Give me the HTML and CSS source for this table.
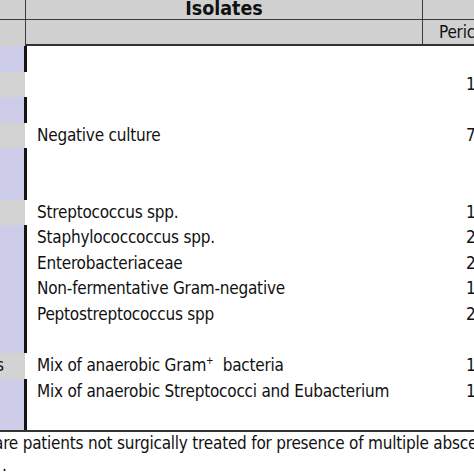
FILE: index.html
```html
<!DOCTYPE html>
<html>
<head>
<meta charset="utf-8">
<link rel="stylesheet" href="styles.css">
</head>
<body>
<div class="sheet">
  <div class="head">
    <div class="h-left r1"></div>
    <div class="h-title r1">Isolates</div>
    <div class="h-right r1"></div>
    <div class="h-left r2"></div>
    <div class="h-mid r2"></div>
    <div class="h-right r2 sub">Peric</div>
  </div>
  <div class="body">
    <div class="lab lav" style="grid-row: 1 / span 1"></div>
    <div class="lab gry" style="grid-row: 2 / span 1"></div>
    <div class="lab lav" style="grid-row: 3 / span 1"></div>
    <div class="lab gry" style="grid-row: 4 / span 1"></div>
    <div class="lab lav" style="grid-row: 5 / span 2"></div>
    <div class="lab gry" style="grid-row: 7 / span 1"></div>
    <div class="lab lav" style="grid-row: 8 / span 5"></div>
    <div class="lab gry" style="grid-row: 13 / span 1"><span class="cut">s</span></div>
    <div class="lab lav" style="grid-row: 14 / span 2"></div>

    <div class="iso" style="grid-row: 1"></div><div class="num" style="grid-row: 1"></div>
    <div class="iso" style="grid-row: 2"></div><div class="num" style="grid-row: 2">1</div>
    <div class="iso" style="grid-row: 3"></div><div class="num" style="grid-row: 3"></div>
    <div class="iso" style="grid-row: 4">Negative culture</div><div class="num" style="grid-row: 4">7</div>
    <div class="iso" style="grid-row: 5"></div><div class="num" style="grid-row: 5"></div>
    <div class="iso" style="grid-row: 6"></div><div class="num" style="grid-row: 6"></div>
    <div class="iso" style="grid-row: 7">Streptococcus spp.</div><div class="num" style="grid-row: 7">1</div>
    <div class="iso" style="grid-row: 8">Staphylococcoccus spp.</div><div class="num" style="grid-row: 8">2</div>
    <div class="iso" style="grid-row: 9">Enterobacteriaceae</div><div class="num" style="grid-row: 9">2</div>
    <div class="iso" style="grid-row: 10">Non-fermentative Gram-negative</div><div class="num" style="grid-row: 10">1</div>
    <div class="iso" style="grid-row: 11">Peptostreptococcus spp</div><div class="num" style="grid-row: 11">2</div>
    <div class="iso" style="grid-row: 12"></div><div class="num" style="grid-row: 12"></div>
    <div class="iso" style="grid-row: 13">Mix of anaerobic Gram<sup>+</sup>&nbsp; bacteria</div><div class="num" style="grid-row: 13">1</div>
    <div class="iso" style="grid-row: 14">Mix of anaerobic Streptococci and Eubacterium</div><div class="num" style="grid-row: 14">1</div>
    <div class="iso" style="grid-row: 15"></div><div class="num" style="grid-row: 15"></div>
  </div>
  <div class="foot">
    <div class="f1">are patients not surgically treated for presence of multiple abscesses</div>
    <div class="f2">.</div>
  </div>
</div>
</body>
</html>
```
FILE: styles.css
```css
html, body {
  margin: 0;
  padding: 0;
  background: #ffffff;
}
body {
  width: 474px;
  height: 474px;
  overflow: hidden;
  font-family: "DejaVu Sans Condensed", "DejaVu Sans", sans-serif;
  font-stretch: condensed;
  font-size: 17px;
  letter-spacing: -0.22px;
  color: #111111;
}
.sheet {
  width: 474px;
  overflow: hidden;
}
.head {
  display: grid;
  grid-template-columns: 26px 397px 51px;
  grid-template-rows: 20px 26px;
  background: #d0d0d0;
}
.head > div {
  box-sizing: border-box;
  white-space: nowrap;
  overflow: hidden;
}
.r1 {
  border-bottom: 1px solid #3a3a3a;
}
.h-left {
  border-right: 1px solid #3a3a3a;
}
.h-title {
  border-right: 1px solid #3a3a3a;
  text-align: center;
  font-weight: bold;
  font-size: 19.5px;
  letter-spacing: 0;
  line-height: 17px;
}
.r2.h-mid, .r2.h-right {
  border-bottom: 2px solid #333;
}
.h-mid {
  border-right: 1px solid #3a3a3a;
}
.sub {
  padding-left: 16px;
  line-height: 24px;
}
.body {
  display: grid;
  grid-template-columns: 27px 396px 51px;
  grid-template-rows: repeat(15, 25.6px);
  border-bottom: 2px solid #333;
}
.lab {
  grid-column: 1;
  box-sizing: border-box;
  overflow: hidden;
  white-space: nowrap;
}
.lav {
  background: #cdcdea;
  border-right: 3px solid #141414;
}
.gry {
  background: #d3d3d3;
  border-right: 2px solid #ffffff;
  line-height: 25.6px;
}
.cut {
  display: inline-block;
  margin-left: -4px;
}
.iso {
  grid-column: 2;
  padding-left: 10px;
  line-height: 25.6px;
  white-space: nowrap;
}
.iso sup {
  font-size: 10px;
  line-height: 0;
  vertical-align: 7px;
}
.num {
  grid-column: 3;
  padding-left: 43px;
  line-height: 25.6px;
  white-space: nowrap;
  overflow: hidden;
}
.foot {
  line-height: 22px;
  white-space: nowrap;
}
.f1 {
  margin-left: -6px;
}
.f2 {
  padding-left: 2px;
}
```
